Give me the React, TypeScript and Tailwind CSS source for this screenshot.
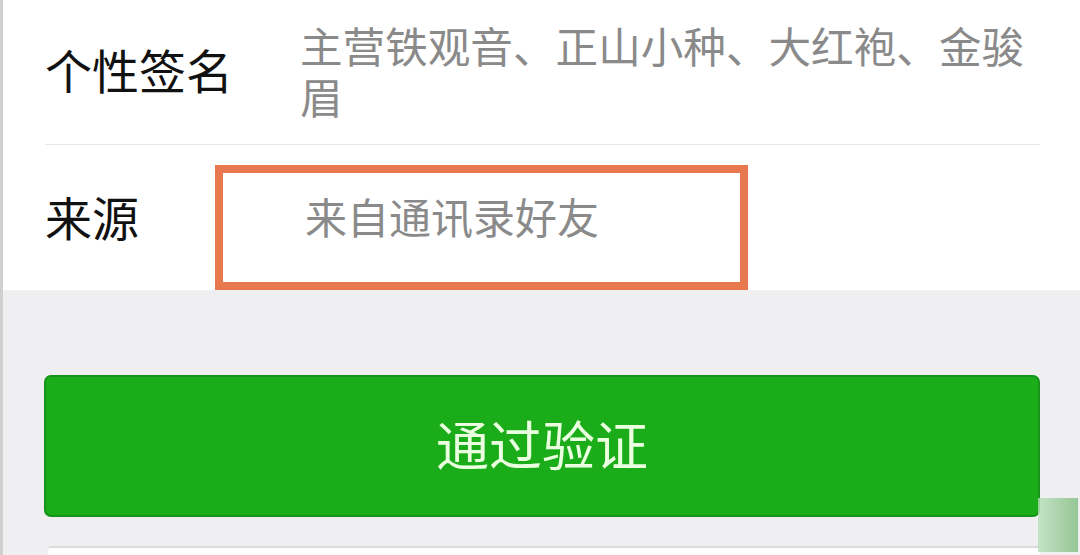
import React from 'react';

const App: React.FC = () => {
  return (
    <div
      className="relative w-[1080px] h-[555px] overflow-hidden bg-[#efeff1] border-l-[3px] border-[#cfcfcf]"
      style={{ fontFamily: '"Noto Sans CJK SC", "Noto Sans", sans-serif' }}
    >
      {/* Profile rows */}
      <section className="bg-white pl-[42px]">
        <div className="flex items-center h-[145px] mr-[40px] border-b border-[#e6e6e6]">
          <div className="w-[255px] shrink-0 text-[47px] text-[#111] leading-none pb-[8px]">个性签名</div>
          <div className="text-[42.6px] leading-[51px] text-[#8a8a8a] pr-[4px] pb-[4px]">
            主营铁观音、正山小种、大红袍、金骏眉
          </div>
        </div>
        <div className="flex h-[145px]">
          <div className="w-[170px] shrink-0 flex items-center text-[47px] text-[#111] leading-none pb-[4px]">来源</div>
          <div className="mt-[20px] w-[533px] h-[125px] border-[8px] border-[#e8784d] pl-[82px] pt-[22px]">
            <span className="text-[42px] leading-none text-[#8a8a8a]">来自通讯录好友</span>
          </div>
        </div>
      </section>

      {/* Action */}
      <div className="pt-[85px] pl-[41px] pr-[40px]">
        <button className="w-full h-[142px] rounded-[7px] bg-[#1aad19] border-[2px] border-[#16941a] text-[53px] text-[#e9ffdf] leading-none pb-[6px]">
          通过验证
        </button>
        <div className="mt-[29px] ml-[4px] h-[20px] bg-white border-t-[2px] border-[#dcdcdc] rounded-t-[3px]" />
      </div>

      {/* corner watermark */}
      <div className="absolute right-[2px] bottom-[3px] w-[40px] h-[54px] bg-gradient-to-r from-[#b9e0b9] to-[#7fbb7f] opacity-80" />
    </div>
  );
};

export default App;
